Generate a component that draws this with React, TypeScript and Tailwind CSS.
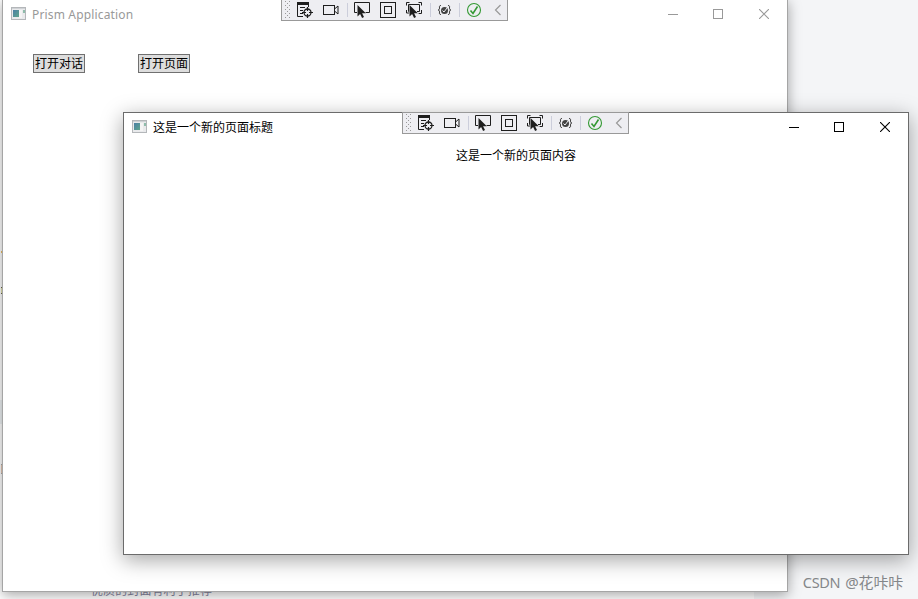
import type { ReactNode } from 'react'

interface AppWindowProps {
  title: string
  active?: boolean
  className: string
  titleClassName: string
  children: ReactNode
}

function AppIcon() {
  return (
    <svg className="mb-[3px]" width="15" height="13" viewBox="0 0 15 13" shapeRendering="crispEdges">
      <defs>
        <linearGradient id="screen" x1="0" y1="0" x2="1" y2="1">
          <stop offset="0" stopColor="#4a7fa5" />
          <stop offset="1" stopColor="#5ea58c" />
        </linearGradient>
      </defs>
      <rect x="0.5" y="0.5" width="14" height="12" fill="#e9eaec" stroke="#b4b7ba" />
      <path d="M1 1.5h13" stroke="#cfd2d5" />
      <rect x="2" y="3" width="6" height="7" fill="url(#screen)" />
      <rect x="8" y="3" width="3" height="8" fill="#f4f4f4" />
      <rect x="12" y="3" width="2" height="3" fill="#8fbcab" />
    </svg>
  )
}

function Separator() {
  return <span className="h-3.5 w-px shrink-0 bg-[#cccedb]" />
}

function Cursor() {
  return (
    <path
      d="M4.500 4v11.500l2.600-2.600 2 4 1.900-.9-1.900-3.700h3.700z"
      fill="currentColor"
      stroke="#eeeef2"
      strokeWidth="1"
      paintOrder="stroke"
    />
  )
}

// XAML debugging toolbar that Visual Studio docks on each window
function DebugToolbar() {
  return (
    <div className="flex h-[22px] w-[227px] items-center border border-[#999] bg-[#eeeef2] text-[#1e1e1e]">
      <svg className="ml-0.5 shrink-0" width="11" height="18" fill="#999" shapeRendering="crispEdges">
        {[0, 4, 8, 12, 16].map(y => (
          <g key={y}>
            <path d={`M1 ${y}h1v1h-1zM5 ${y}h1v1h-1z`} />
            {y < 16 && <path d={`M3 ${y + 2}h1v1h-1z`} />}
          </g>
        ))}
      </svg>
      {/* live visual tree */}
      <svg className="ml-px shrink-0" width="18" height="18" fill="none" stroke="currentColor">
        <path d="M1 1h12v3H1z" fill="currentColor" stroke="none" />
        <path d="M1.500 3v12.500H7M12.500 3v3M4 6.500h5M4 9.500h3M4 12.500h3" />
        <circle cx="11.500" cy="11.500" r="3.500" strokeWidth="1.300" />
        <path d="M11.500 6v4M11.500 13v4M6 11.500h4M13 11.500h4" strokeWidth="1.200" />
      </svg>
      <svg className="ml-2 shrink-0" width="18" height="18" fill="none" stroke="currentColor">
        <rect x="1.500" y="4.500" width="11" height="9" />
        <path d="M12.500 8l3.500-3v8l-3.500-3" />
      </svg>
      <span className="w-[7px]" />
      <Separator />
      {/* select element */}
      <svg className="ml-[5px] shrink-0" width="18" height="18" fill="none" stroke="currentColor">
        <path d="M4 11.500H1.500v-10h15v10H12" />
        <Cursor />
      </svg>
      <svg className="ml-2 shrink-0" width="18" height="18" fill="none" stroke="currentColor">
        <rect x="1.500" y="1.500" width="15" height="15" />
        <rect x="5.500" y="5.500" width="7" height="7" />
      </svg>
      {/* track focused element */}
      <svg className="ml-2 shrink-0" width="18" height="18" fill="none" stroke="currentColor">
        <path d="M1.500 4.500v-3h3M13.500 1.500h3v3M1.500 9v3h3M13.500 12.500h3V9" />
        <path d="M5 10.500H3.500v-7h11v7H12" />
        <Cursor />
      </svg>
      <span className="w-[7px]" />
      <Separator />
      {/* hot reload settings */}
      <svg className="ml-[5px] shrink-0" width="18" height="18" fill="none" stroke="#424242">
        <path d="M5 4.500c-2 0-1.500 1-1.500 2.500S3 9 2 9c1 0 1.500.5 1.500 2S3 13.500 5 13.500" />
        <path d="M12 4.500c2 0 1.500 1 1.500 2.500s.5 2 1.500 2c-1 0-1.500.5-1.500 2s.5 2.500-1.500 2.500" />
        <circle cx="8.500" cy="9.500" r="3.500" fill="#424242" stroke="none" />
        <path d="M6.500 9.500l1.500 1.500 3-4" stroke="#eeeef2" />
      </svg>
      <span className="w-[5px]" />
      <Separator />
      <svg className="ml-[5px] shrink-0" width="18" height="18" fill="none" stroke="#339933">
        <circle cx="9" cy="9" r="6.500" strokeWidth="1.100" />
        <path d="M5.500 9.500l2.500 3 4.500-7" strokeWidth="1.600" />
      </svg>
      <svg className="ml-2.5 shrink-0" width="12" height="18" fill="none" stroke="#999">
        <path d="M7.500 4L2.500 9l5 5" strokeWidth="1.200" />
      </svg>
    </div>
  )
}

function CaptionButtons() {
  return (
    <div className="flex h-7 pr-px">
      <button className="flex w-[45px] items-center justify-center" aria-label="Minimize">
        <svg width="10" height="10" fill="none" stroke="currentColor" shapeRendering="crispEdges"><path d="M0 5.500h10" /></svg>
      </button>
      <button className="flex w-[46px] items-center justify-center" aria-label="Maximize">
        <svg width="10" height="10" fill="none" stroke="currentColor" shapeRendering="crispEdges"><path d="M.5.5h9v9h-9z" /></svg>
      </button>
      <button className="flex w-[45px] items-center justify-center" aria-label="Close">
        <svg width="10" height="10" fill="none" stroke="currentColor"><path d="M0 0l10 10M10 0L0 10" strokeWidth="1.100" /></svg>
      </button>
    </div>
  )
}

function AppWindow({ title, active, className, titleClassName, children }: AppWindowProps) {
  return (
    <section className={`absolute flex w-[786px] flex-col border bg-white ${active ? 'border-[#6b6b6b] text-black' : 'border-[#a5a5a5] text-[#999]'} ${className}`}>
      <header className="flex h-[30px] shrink-0 justify-between">
        <div className="flex items-center pl-2">
          <AppIcon />
          <h1 className={`ml-1.5 whitespace-nowrap ${titleClassName}`}>{title}</h1>
        </div>
        <CaptionButtons />
      </header>
      <div className="absolute -top-px left-[278px]">
        <DebugToolbar />
      </div>
      {children}
    </section>
  )
}

function OpenButton({ label }: { label: string }) {
  return (
    <button className="h-[19px] w-[52px] whitespace-nowrap border border-[#707070] bg-[#dddddd] text-xs leading-[17px] text-black">
      {label}
    </button>
  )
}

export default function App() {
  return (
    <main className="relative flex h-[599px] w-[918px] overflow-hidden bg-white font-['Noto_Sans','Noto_Sans_CJK_SC',sans-serif] text-xs">
      {/* editor page behind the windows */}
      <div className="flex w-[754px] flex-col">
        <div className="mt-[251px] ml-px h-0.5 w-px bg-[#f0c060]" />
        <div className="mt-[34px] ml-px h-[7px] w-px border-y border-[#66664f] bg-[#e8e6b0]" />
        <div className="mt-[106px] h-6 w-[2px] bg-[#eef2f4]" />
        <div className="mt-10 ml-px h-2.5 w-px border-y border-[#aaa] bg-[#e9c9b5]" />
        <p className="mt-auto pl-[91px] text-xs leading-4 tracking-[0.1px] text-[#85859f]">优质的封面有利于推荐</p>
      </div>
      <div className="flex flex-1 items-end justify-end bg-[#f4f5f7] pr-[15px] pb-2">
        <p className="flex gap-[5px] text-[15px] leading-[18px] whitespace-nowrap text-[#85878a]">
          <span className="text-[14.5px] tracking-[-0.3px]">CSDN</span>
          <span className="tracking-[-0.2px]">@花咔咔</span>
        </p>
      </div>

      <AppWindow
        title="Prism Application"
        className="-top-px left-[2px] h-[593px] shadow-[0_3px_12px_rgba(0,0,0,0.35)]"
        titleClassName="text-xs tracking-[0.16px]"
      >
        <div className="flex gap-[53px] pt-6 pl-[30px]">
          <OpenButton label="打开对话" />
          <OpenButton label="打开页面" />
        </div>
      </AppWindow>

      <AppWindow
        active
        title="这是一个新的页面标题"
        className="top-[112px] left-[123px] h-[443px] shadow-[0_5px_20px_rgba(0,0,0,0.36)]"
        titleClassName="text-xs"
      >
        <p className="pt-1 text-center text-xs leading-[18px]">这是一个新的页面内容</p>
      </AppWindow>
    </main>
  )
}
